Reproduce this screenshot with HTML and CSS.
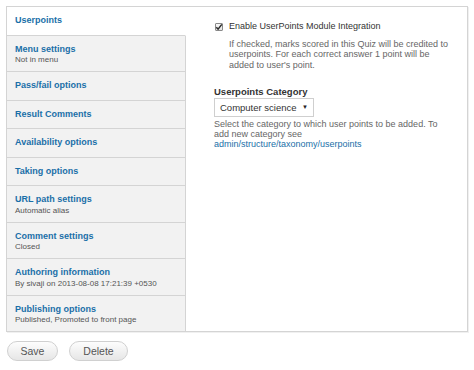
FILE: index.html
```html
<!DOCTYPE html>
<html>
<head>
<meta charset="utf-8">
<link rel="stylesheet" href="styles.css">
</head>
<body>
<div class="page">
  <div class="vtabs">
    <ul class="tab-list">
      <li class="tab active"><span class="tab-title">Userpoints</span></li>
      <li class="tab"><span class="tab-title">Menu settings</span><span class="tab-summary">Not in menu</span></li>
      <li class="tab"><span class="tab-title">Pass/fail options</span></li>
      <li class="tab"><span class="tab-title">Result Comments</span></li>
      <li class="tab"><span class="tab-title">Availability options</span></li>
      <li class="tab"><span class="tab-title">Taking options</span></li>
      <li class="tab"><span class="tab-title">URL path settings</span><span class="tab-summary">Automatic alias</span></li>
      <li class="tab"><span class="tab-title">Comment settings</span><span class="tab-summary">Closed</span></li>
      <li class="tab"><span class="tab-title">Authoring information</span><span class="tab-summary">By sivaji on 2013-08-08 17:21:39 +0530</span></li>
      <li class="tab last"><span class="tab-title">Publishing options</span><span class="tab-summary">Published, Promoted to front page</span></li>
    </ul>
    <div class="panel">
      <div class="check-row">
        <span class="checkbox"><svg width="8" height="8" viewBox="0 0 8 8"><path d="M1.3 4.2 L3.1 6.2 L6.8 1.4" fill="none" stroke="#2b2b2b" stroke-width="1.5"/></svg></span>
        <span class="check-label">Enable UserPoints Module Integration</span>
      </div>
      <div class="description indent">If checked, marks scored in this Quiz will be credited to userpoints. For each correct answer 1 point will be added to user's point.</div>
      <div class="field-label">Userpoints Category</div>
      <div class="select"><span class="select-text">Computer science</span><span class="select-arrow">&#9660;</span></div>
      <div class="description help">Select the category to which user points to be added. To add new category see <a class="link" href="#">admin/structure/taxonomy/userpoints</a></div>
    </div>
  </div>
  <div class="actions">
    <button class="btn save">Save</button>
    <button class="btn delete">Delete</button>
  </div>
</div>
</body>
</html>
```
FILE: styles.css
```css
html, body {
  margin: 0;
  padding: 0;
  background: #fff;
}
body {
  font-family: "Liberation Sans", Arial, sans-serif;
  color: #333;
}
.page {
  padding: 6px 0 0 6px;
}
.vtabs {
  width: 462px;
  box-sizing: border-box;
  border: 1px solid #d4d4d4;
  display: flex;
  box-shadow: 1px 1px 0 #f0f0f0;
}
.tab-list {
  list-style: none;
  margin: 0;
  padding: 0;
  width: 179px;
  flex: none;
  display: flex;
  flex-direction: column;
}
.tab {
  background: #f2f2f2;
  border-right: 1px solid #d4d4d4;
  border-bottom: 1px solid #d4d4d4;
  padding: 8px 8px 8px 8px;
  display: flex;
  flex-direction: column;
}
.tab.active {
  background: #fff;
  border-right-color: #fff;
}
.tab.last {
  border-bottom: none;
  flex: 1;
}
.tab-title {
  font-weight: bold;
  font-size: 9px;
  line-height: 11.5px;
  color: #1a6fa8;
}
.tab-summary {
  font-size: 8px;
  line-height: 9.5px;
  margin-bottom: -1.5px;
  color: #555;
}
.panel {
  flex: 1;
  padding: 14px 12px 0 28px;
}
.check-row {
  display: flex;
  align-items: center;
  gap: 6px;
  height: 11px;
  padding-left: 1px;
}
.checkbox {
  width: 8px;
  height: 8px;
  box-sizing: border-box;
  border: 1px solid #8a8a8a;
  border-radius: 1px;
  background: linear-gradient(#fafafa, #e2e2e2);
  display: flex;
  align-items: center;
  justify-content: center;
}
.checkbox svg {
  display: block;
  margin: -1px;
}
.check-label {
  font-size: 9px;
  line-height: 11px;
  color: #333;
}
.description {
  font-size: 9px;
  line-height: 10.3px;
  color: #666;
}
.indent {
  margin: 7px 0 0 15px;
}
.field-label {
  font-weight: bold;
  font-size: 9.5px;
  line-height: 12px;
  color: #333;
  margin-top: 16px;
}
.select {
  margin-top: 0;
  width: 100px;
  height: 19px;
  box-sizing: border-box;
  border: 1px solid #cfcfcf;
  background: #fff;
  display: flex;
  align-items: center;
  padding-left: 5px;
  font-size: 9.5px;
  color: #333;
}
.select-text {
  flex: 1;
}
.select-arrow {
  font-size: 6px;
  margin-right: 5px;
  color: #222;
}
.help {
  margin-top: 2px;
  max-width: 238px;
}
.link {
  color: #1a6fa8;
  text-decoration: none;
}
.actions {
  display: flex;
  gap: 11px;
  margin-top: 9px;
  padding-left: 1px;
}
.btn {
  height: 20px;
  border: 1px solid #d0d0d0;
  border-radius: 10px;
  background: linear-gradient(#fdfdfd, #e6e6e6);
  font-family: "Liberation Sans", Arial, sans-serif;
  font-size: 10.5px;
  color: #555;
  padding: 0;
  margin: 0;
}
.save {
  width: 51px;
}
.delete {
  width: 59px;
}
```
